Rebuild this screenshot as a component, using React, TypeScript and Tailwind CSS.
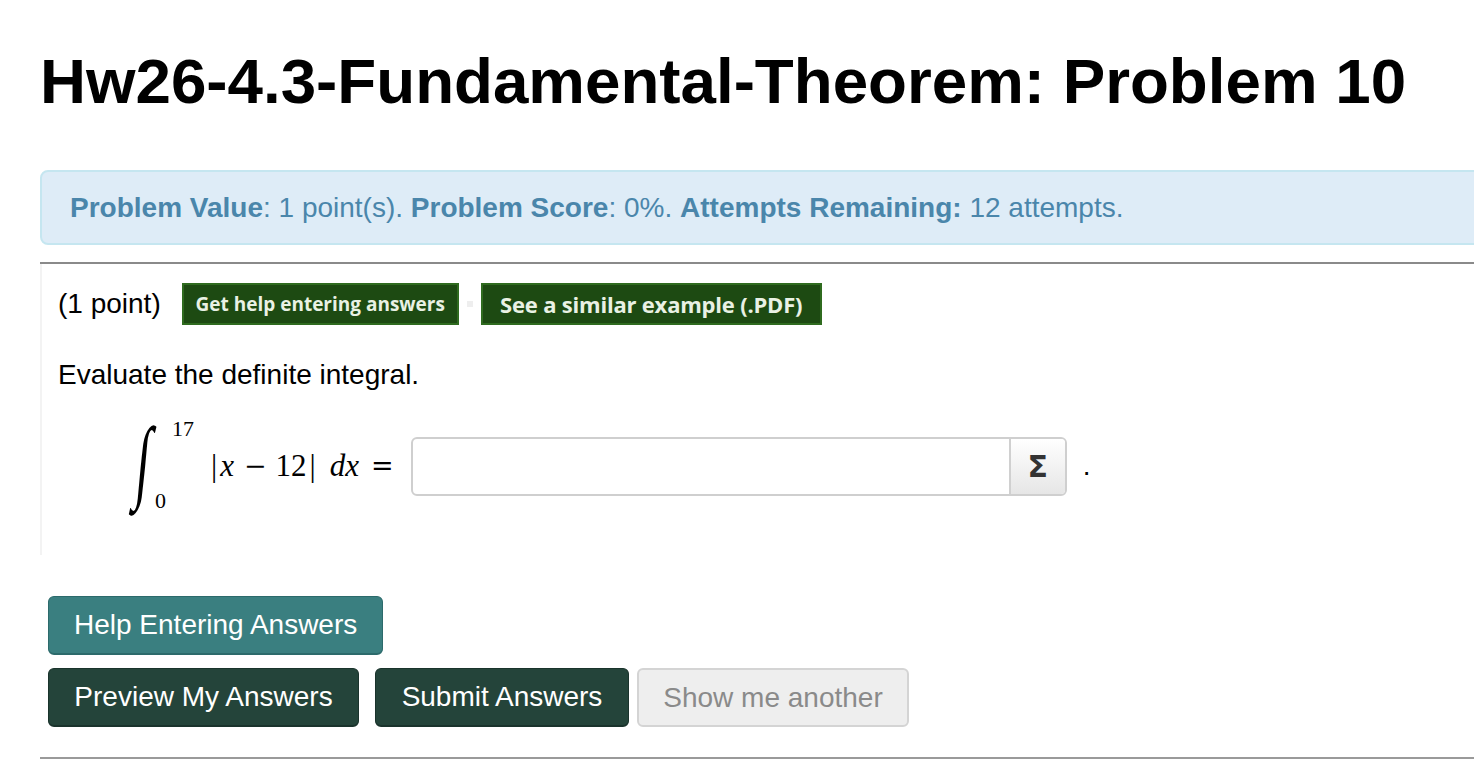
import React from 'react';

const sans = { fontFamily: '"Liberation Sans", Arial, sans-serif' };

function GreenLink({ label, className }: { label: string; className: string }) {
  return (
    <span
      className={`flex h-[42px] items-center justify-center border-2 border-[#2f6b1f] bg-[#1d4a12] font-['Open_Sans',sans-serif] font-bold text-[#e9f1e4] ${className}`}
    >
      {label}
    </span>
  );
}

function IntegralExpr() {
  return (
    <div className="flex items-center font-['Liberation_Serif',serif] text-[31px] text-black">
      <div className="relative h-[92px] w-[81px]">
        <span className="absolute left-[1px] top-[-6px] origin-center -skew-x-[10deg] scale-x-[0.55] text-[92px] leading-none">∫</span>
        <span className="absolute left-[42px] top-[-2px] text-[22px] leading-none">17</span>
        <span className="absolute left-[25px] top-[70px] text-[22px] leading-none">0</span>
      </div>
      <span>|</span>
      <span className="ml-[3px] italic">x</span>
      <span className="ml-[10px] font-['DejaVu_Serif',serif] text-[27px]">−</span>
      <span className="ml-[9px]">12</span>
      <span className="ml-[3px]">|</span>
      <span className="ml-[14px] italic">dx</span>
      <span className="ml-[12px] font-['DejaVu_Serif',serif] text-[27px]">=</span>
    </div>
  );
}

export default function App() {
  return (
    <div className="min-h-screen w-full overflow-hidden bg-white text-black" style={sans}>
      <div className="w-[1520px] pl-[40px]">
        <h1 className="mt-[46px] text-[63.7px] font-bold leading-[69px]">
          Hw26-4.3-Fundamental-Theorem: Problem 10
        </h1>

        <div className="mt-[55px] rounded-l-[8px] border-2 border-[#c5e6f0] bg-[#deecf7] pb-[15px] pl-[28px] pt-[16px] text-[28px] leading-[40px] text-[#4a86ab]">
          <b>Problem Value</b>: 1 point(s). <b>Problem Score</b>: 0%. <b>Attempts Remaining:</b> 12 attempts.
        </div>

        <div className="mt-[17px] h-[2px] bg-[#8a8a8a]" />

        <div className="border-l-2 border-[#f3f3f3] pb-[43px] pl-[16px] pt-[19px]">
          <div className="flex items-center text-[28px]">
            <span>(1 point)</span>
            <GreenLink label="Get help entering answers" className="ml-[21px] w-[277px] text-[19px]" />
            <span className="mx-[8px] h-[6px] w-[6px] bg-[#eeeeee]" />
            <GreenLink label="See a similar example (.PDF)" className="w-[341px] text-[22px] tracking-[-0.2px]" />
          </div>

          <p className="mt-[30px] text-[28px] leading-[40px]">Evaluate the definite integral.</p>

          <div className="mt-[25px] flex items-center pl-[72px]">
            <IntegralExpr />
            <div className="ml-[17px] flex h-[59px] w-[656px] overflow-hidden rounded-[6px] border-2 border-[#cfcfcf] bg-white">
              <div className="flex-1" />
              <div className="flex w-[56px] items-center justify-center border-l-2 border-[#d0d0d0] bg-gradient-to-b from-white to-[#e6e6e6] font-['DejaVu_Sans',sans-serif] text-[30px] font-bold text-[#333]">
                Σ
              </div>
            </div>
            <span className="ml-[16px] text-[28px]">.</span>
          </div>
        </div>

        <div className="ml-[8px] mt-[41px]">
          <button className="h-[59px] rounded-[6px] border border-b-2 border-[#2c6a6b] bg-[#3a7f80] px-[25px] text-[28px] text-white">
            Help Entering Answers
          </button>
          <div className="mt-[13px] flex">
            <button className="h-[59px] w-[311px] rounded-[6px] border border-b-2 border-[#1a332c] bg-[#24443a] text-[28px] text-white">
              Preview My Answers
            </button>
            <button className="ml-[16px] h-[59px] w-[254px] rounded-[6px] border border-b-2 border-[#1a332c] bg-[#24443a] text-[28px] text-white">
              Submit Answers
            </button>
            <button className="ml-[8px] h-[59px] w-[272px] rounded-[6px] border-2 border-[#d4d4d4] bg-[#eeeeee] text-[28px] text-[#8a8a8a]">
              Show me another
            </button>
          </div>
        </div>

        <div className="mt-[30px] h-[2px] bg-[#9a9a9a]" />
      </div>
    </div>
  );
}
